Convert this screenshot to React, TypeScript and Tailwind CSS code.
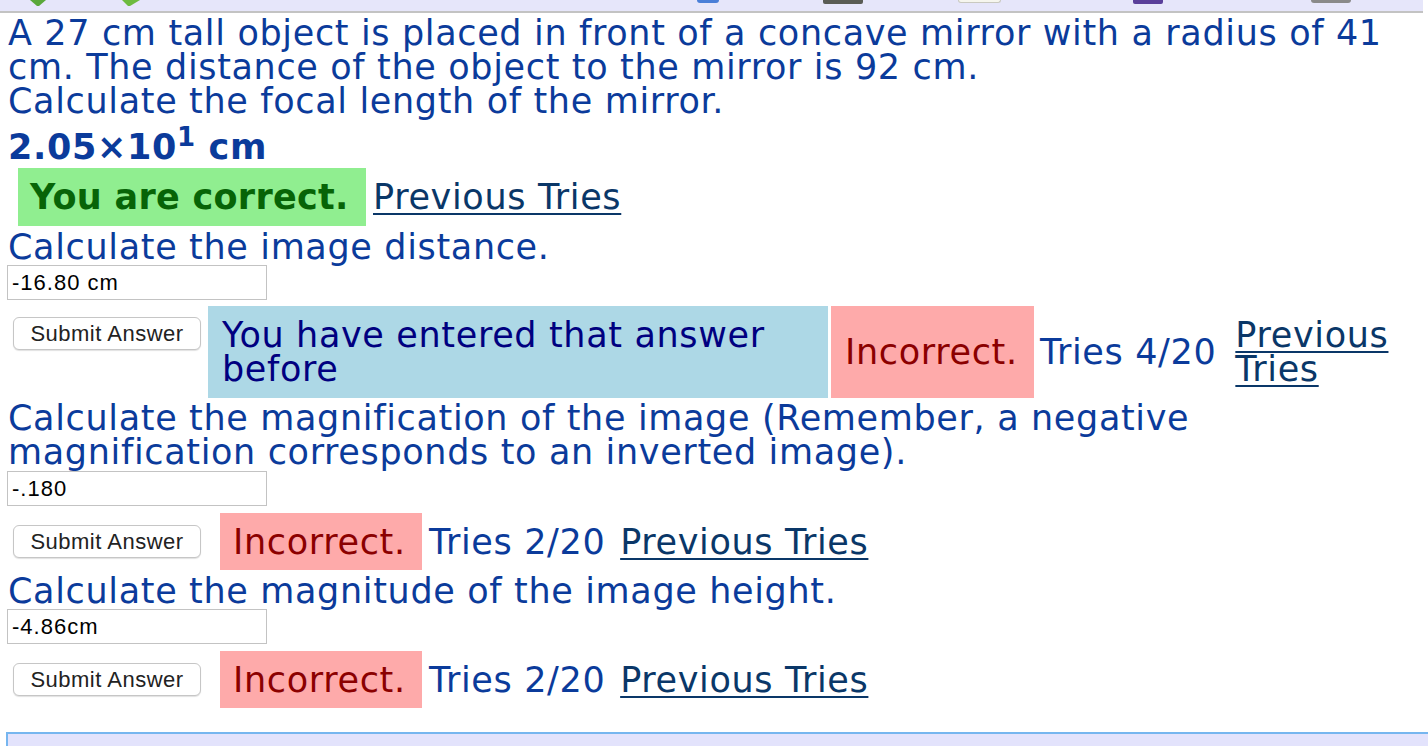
const textBlue = "text-[#0b3b9b]";

function SubmitButton({ className = "" }: { className?: string }) {
  return (
    <button
      className={`ml-[13px] h-[33px] w-[188px] shrink-0 rounded-[6px] border border-[#c6c6c6] bg-white font-['Liberation_Sans',Arial,sans-serif] text-[22px] leading-none tracking-[0.5px] text-[#222] shadow-[0_1px_1px_rgba(0,0,0,0.12)] ${className}`}
    >
      Submit Answer
    </button>
  );
}

function AnswerInput({ value }: { value: string }) {
  return (
    <input
      readOnly
      value={value}
      className="ml-[7px] block h-[35px] w-[260px] border border-[#c3c3c3] bg-white px-[4px] font-['Liberation_Sans',Arial,sans-serif] text-[22px] tracking-[1px] text-black outline-none"
    />
  );
}

function PrevTries() {
  return (
    <a href="#" className="text-[#0a3768] underline decoration-[2px] underline-offset-[4px]">
      Previous Tries
    </a>
  );
}

function IncorrectRow({ tries }: { tries: string }) {
  return (
    <div className="flex h-[57px] items-stretch">
      <SubmitButton className="self-center" />
      <div className="ml-[19px] flex w-[202px] items-center bg-[#feaaaa] px-[13px] text-[#8b0000]">
        Incorrect.
      </div>
      <div className={`ml-[7px] self-center whitespace-nowrap ${textBlue}`}>
        Tries {tries}{" "}
        <span className="ml-[3px]">
          <PrevTries />
        </span>
      </div>
    </div>
  );
}

function Toolbar() {
  return (
    <div className="flex h-[13px] w-[1423px] items-start overflow-hidden border-b-2 border-[#c3c3c3] bg-[#e6e6fa]">
      <svg className="ml-[30px]" width="16" height="6" viewBox="0 0 16 6">
        <polygon points="0,0 16,0 9,6 7,6" fill="#5aa83a" />
      </svg>
      <svg className="ml-[76px]" width="18" height="6" viewBox="0 0 18 6">
        <polygon points="0,0 18,0 8,6 6,6" fill="#6dbb3f" />
      </svg>
      <div className="ml-[557px] h-[3px] w-[22px] rounded-b-full bg-[#4a7fd8]" />
      <div className="ml-[104px] h-[4px] w-[40px] rounded-b-[2px] bg-[#5a5c55]" />
      <div className="ml-[95px] h-[3px] w-[43px] rounded-b-[3px] border border-t-0 border-[#c9c9c0] bg-[#f6f6ee]" />
      <div className="ml-[132px] h-[4px] w-[30px] rounded-b-[2px] bg-[#5a3f9a]" />
      <div className="ml-[148px] h-[3px] w-[40px] rounded-b-full bg-[#8a8a8a]" />
    </div>
  );
}

export default function App() {
  return (
    <div className="h-[746px] w-[1428px] overflow-hidden bg-white font-['DejaVu_Sans',Verdana,sans-serif] text-[35px] leading-[34px] tracking-[0.65px]">
      <Toolbar />

      <p className={`mt-[3px] ml-[8px] whitespace-nowrap ${textBlue}`}>
        A 27 cm tall object is placed in front of a concave mirror with a radius of 41
        <br />
        cm. The distance of the object to the mirror is 92 cm.
        <br />
        Calculate the focal length of the mirror.
      </p>

      <p className={`mt-[12px] ml-[8px] font-bold ${textBlue}`}>
        2.05×10<sup className="text-[26px]">1</sup> cm
      </p>

      <div className="mt-[4px] flex items-baseline">
        <div className="ml-[18px] flex h-[58px] w-[348px] items-center whitespace-nowrap bg-[#90ee90] px-[12px] font-bold tracking-[0.3px] text-[#076407]">
          You are correct.
        </div>
        <span className="ml-[7px]">
          <PrevTries />
        </span>
      </div>

      <p className={`mt-[4px] ml-[8px] ${textBlue}`}>Calculate the image distance.</p>
      <div className="mt-[1px]">
        <AnswerInput value="-16.80 cm" />
      </div>

      <div className="mt-[6px] flex h-[92px] items-stretch">
        <SubmitButton className="mt-[11px] self-start" />
        <div className="ml-[7px] w-[620px] bg-[#add8e6] px-[14px] py-[12px] text-[#000080]">
          You have entered that answer before
        </div>
        <div className="ml-[3px] flex w-[203px] items-center bg-[#feaaaa] px-[14px] text-[#8b0000]">
          Incorrect.
        </div>
        <div className={`ml-[6px] self-center whitespace-nowrap ${textBlue}`}>Tries 4/20</div>
        <a
          href="#"
          className="ml-[19px] self-center text-[#0a3768] underline decoration-[2px] underline-offset-[4px]"
        >
          Previous
          <br />
          Tries
        </a>
      </div>

      <p className={`mt-[3px] ml-[8px] whitespace-nowrap ${textBlue}`}>
        Calculate the magnification of the image (Remember, a negative
        <br />
        magnification corresponds to an inverted image).
      </p>
      <div className="mt-[2px]">
        <AnswerInput value="-.180" />
      </div>
      <div className="mt-[7px]">
        <IncorrectRow tries="2/20" />
      </div>

      <p className={`mt-[4px] ml-[8px] ${textBlue}`}>Calculate the magnitude of the image height.</p>
      <div className="mt-[1px]">
        <AnswerInput value="-4.86cm" />
      </div>
      <div className="mt-[7px]">
        <IncorrectRow tries="2/20" />
      </div>

      <div className="mt-[24px] ml-[6px] h-[40px] w-[1440px] border-2 border-[#76b6ef] bg-[#e3e3fc]" />
    </div>
  );
}
